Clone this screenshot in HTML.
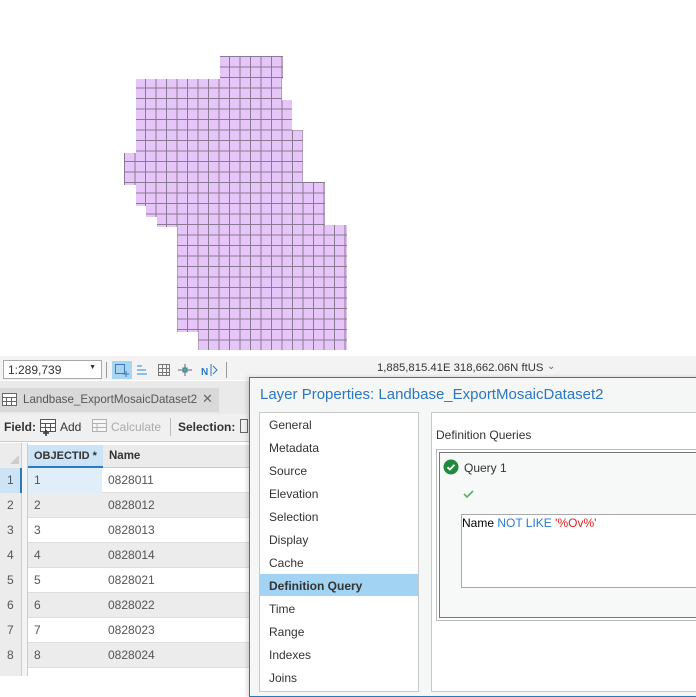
<!DOCTYPE html>
<html><head><style>
*{margin:0;padding:0;box-sizing:border-box}
body{width:696px;height:676px;overflow:hidden;background:#fff;font-family:"Liberation Sans",sans-serif;position:relative;font-size:12px;color:#333}
.a{position:absolute}
.map{left:124px;top:56px;width:224px;height:295px;background-color:#e6c6f8;
background-image:linear-gradient(90deg,#8a7a90 1px,transparent 1px),linear-gradient(#8a7a90 1px,transparent 1px);
background-size:10.5px 10.5px;background-position:0 0;
clip-path:polygon(96px 0,159px 0,159px 23px,158px 23px,158px 44px,168px 44px,168px 74px,179px 74px,179px 126px,201px 126px,201px 169px,223px 169px,223px 294px,74px 294px,74px 276px,53px 276px,53px 171px,33px 171px,33px 161px,22px 161px,22px 150px,12px 150px,12px 129px,0 129px,0 97px,12px 97px,12px 23px,96px 23px)}
.li{position:absolute;left:10px;font-size:12px;color:#333}
</style></head><body>
<div class="a map"></div>
<!-- status bar -->
<div class="a" style="left:0;top:356px;width:696px;height:24px;background:#f3f3f3"></div>
<div class="a" style="left:3px;top:360px;width:99px;height:19px;background:#fff;border:1px solid #aaa;font-size:12px;padding:2px 4px">1:289,739<span style="position:absolute;right:5px;top:3px;font-size:7px">▼</span></div>
<div class="a" style="left:106px;top:362px;width:1px;height:16px;background:#999"></div>
<div class="a" style="left:112px;top:361px;width:20px;height:18px;background:#a9d5f3"></div>
<svg class="a" style="left:112px;top:361px" width="120" height="18"><g fill="none" stroke="#3a7bc0" stroke-width="1"><rect x="3.5" y="3.5" width="9" height="9"/><path d="M11 13h6M14 10v6"/><path d="M25 5h5M25 9h9M25 13h10" stroke="#2a8ad0"/><rect x="46.5" y="3.5" width="11" height="11" stroke="#777"/><path d="M46 7.5h12M46 11.5h12M50.5 3v12M54.5 3v12" stroke="#777"/><path d="M66 9h14M73 3v12" stroke="#666"/><rect x="71" y="7" width="4" height="4" fill="#6a6"/></g><text x="89" y="14" font-size="10" font-weight="bold" fill="#2a7ac0" font-family="Liberation Sans">N</text><path d="M99 3v12M101 5l4 4-4 4" stroke="#2a7ac0" fill="none"/></svg>
<div class="a" style="left:226px;top:362px;width:1px;height:16px;background:#999"></div>
<div class="a" style="left:377px;top:362px;font-size:11.3px;color:#333">1,885,815.41E 318,662.06N ftUS</div>
<div class="a" style="left:547px;top:361px;font-size:10px;color:#666">⌄</div>
<!-- tab row -->
<div class="a" style="left:0;top:381px;width:250px;height:33px;background:#eaeaea"></div>
<div class="a" style="left:0;top:388px;width:219px;height:24px;background:#d9d9d9"></div>
<svg class="a" style="left:2px;top:393px" width="16" height="14"><rect x=".5" y=".5" width="14" height="12" fill="#fff" stroke="#666"/><path d="M0 4.5h15M0 8.5h15M4.5 4v9M9.5 4v9" stroke="#666"/></svg>
<div class="a" style="left:23px;top:393px;font-size:11.6px;color:#555">Landbase_ExportMosaicDataset2</div>
<div class="a" style="left:202px;top:391px;font-size:13px;color:#666">✕</div>
<div class="a" style="left:0;top:414px;width:250px;height:28px;background:#f0f0f0;border-bottom:1px solid #ccc"></div>
<div class="a" style="left:4px;top:420px;font-size:12px;font-weight:bold;color:#333">Field:</div>
<svg class="a" style="left:40px;top:419px" width="18" height="17"><rect x=".5" y=".5" width="15" height="12" fill="#fff" stroke="#555"/><path d="M0 4.5h16M0 8.5h16M5.5 4v9M10.5 4v9" stroke="#555"/><path d="M3 14h6M6 11v6" stroke="#333" stroke-width="1.5"/></svg>
<div class="a" style="left:60px;top:420px;font-size:12px;color:#333">Add</div>
<svg class="a" style="left:92px;top:419px" width="16" height="17" opacity=".4"><rect x=".5" y=".5" width="14" height="12" fill="#fff" stroke="#555"/><path d="M0 4.5h15M0 8.5h15M5 4v9" stroke="#555"/></svg>
<div class="a" style="left:111px;top:420px;font-size:12px;color:#aaa">Calculate</div>
<div class="a" style="left:170px;top:418px;width:1px;height:18px;background:#bbb"></div>
<div class="a" style="left:178px;top:420px;font-size:12px;font-weight:bold;color:#333">Selection:</div>
<div class="a" style="left:240px;top:419px;width:8px;height:14px;border:1px solid #666"></div>
<!-- table -->
<div class="a" style="left:0;top:443px;width:22px;height:233px;background:#ececec;border-right:1px solid #ccc"></div>
<div class="a" style="left:22px;top:443px;width:6px;height:233px;background:#f4f4f4;border-right:1px solid #ccc"></div>
<div class="a" style="left:28px;top:445px;width:222px;height:23px;background:#ebebeb;border-bottom:1px solid #ccc"></div>
<div class="a" style="left:28px;top:445px;width:75px;height:23px;background:#cde4f6;border-bottom:2px solid #2a7ac0"></div>
<div class="a" style="left:34px;top:450px;font-size:11px;font-weight:bold;color:#333">OBJECTID *</div>
<div class="a" style="left:109px;top:450px;font-size:11.5px;font-weight:bold;color:#333">Name</div>
<div class="a" style="left:10px;top:455px;width:0;height:0;border-left:9px solid transparent;border-bottom:9px solid #ccc"></div>
<div class="a" style="left:102px;top:468px;width:1px;height:208px;background:#ccc"></div>

<div class="a" style="left:28px;top:468px;width:222px;height:25px;background:#fff;border-bottom:1px solid #ddd"></div>
<div class="a" style="left:28px;top:468px;width:74px;height:25px;background:#e0eef9"></div>
<div class="a" style="left:0;top:468px;width:22px;height:25px;background:#cde4f6;border-right:2px solid #2a7ac0"></div>
<div class="a" style="left:28px;top:493px;width:222px;height:25px;background:#ececec;border-bottom:1px solid #ddd"></div>
<div class="a" style="left:28px;top:518px;width:222px;height:25px;background:#fff;border-bottom:1px solid #ddd"></div>
<div class="a" style="left:28px;top:543px;width:222px;height:25px;background:#ececec;border-bottom:1px solid #ddd"></div>
<div class="a" style="left:28px;top:568px;width:222px;height:25px;background:#fff;border-bottom:1px solid #ddd"></div>
<div class="a" style="left:28px;top:593px;width:222px;height:25px;background:#ececec;border-bottom:1px solid #ddd"></div>
<div class="a" style="left:28px;top:618px;width:222px;height:25px;background:#fff;border-bottom:1px solid #ddd"></div>
<div class="a" style="left:28px;top:643px;width:222px;height:25px;background:#ececec;border-bottom:1px solid #ddd"></div>
<div class="a" style="left:28px;top:668px;width:222px;height:8px;background:#fff"></div>
<div class="a" style="left:0;top:468px;width:250px;font-size:12px;color:#555;line-height:25px">
<div style="position:relative;height:25px"><span style="position:absolute;left:7px">1</span><span style="position:absolute;left:34px">1</span><span style="position:absolute;left:108px">0828011</span></div>
<div style="position:relative;height:25px"><span style="position:absolute;left:7px">2</span><span style="position:absolute;left:34px">2</span><span style="position:absolute;left:108px">0828012</span></div>
<div style="position:relative;height:25px"><span style="position:absolute;left:7px">3</span><span style="position:absolute;left:34px">3</span><span style="position:absolute;left:108px">0828013</span></div>
<div style="position:relative;height:25px"><span style="position:absolute;left:7px">4</span><span style="position:absolute;left:34px">4</span><span style="position:absolute;left:108px">0828014</span></div>
<div style="position:relative;height:25px"><span style="position:absolute;left:7px">5</span><span style="position:absolute;left:34px">5</span><span style="position:absolute;left:108px">0828021</span></div>
<div style="position:relative;height:25px"><span style="position:absolute;left:7px">6</span><span style="position:absolute;left:34px">6</span><span style="position:absolute;left:108px">0828022</span></div>
<div style="position:relative;height:25px"><span style="position:absolute;left:7px">7</span><span style="position:absolute;left:34px">7</span><span style="position:absolute;left:108px">0828023</span></div>
<div style="position:relative;height:25px"><span style="position:absolute;left:7px">8</span><span style="position:absolute;left:34px">8</span><span style="position:absolute;left:108px">0828024</span></div>
</div>
<!-- dialog -->
<div class="a" style="left:249px;top:377px;width:460px;height:320px;background:#f5f6f6;border:1px solid #2a7ab8;box-shadow:-2px 0 4px rgba(0,0,0,.15)"></div>
<div class="a" style="left:260px;top:386px;font-size:15px;color:#2a78c2">Layer Properties: Landbase_ExportMosaicDataset2</div>
<div class="a" style="left:259px;top:412px;width:160px;height:280px;background:#fff;border:1px solid #c8c8c8"></div>
<div class="a" style="left:260px;top:574px;width:158px;height:22px;background:#a3d3f2"></div>
<div class="a" style="left:259px;top:412px;width:160px;height:264px">
<div class="li" style="top:6px">General</div>
<div class="li" style="top:29px">Metadata</div>
<div class="li" style="top:52px">Source</div>
<div class="li" style="top:75px">Elevation</div>
<div class="li" style="top:98px">Selection</div>
<div class="li" style="top:121px">Display</div>
<div class="li" style="top:144px">Cache</div>
<div class="li" style="top:167px;font-weight:bold">Definition Query</div>
<div class="li" style="top:190px">Time</div>
<div class="li" style="top:213px">Range</div>
<div class="li" style="top:236px">Indexes</div>
<div class="li" style="top:259px">Joins</div>
</div>
<div class="a" style="left:431px;top:412px;width:270px;height:280px;background:#fff;border:1px solid #c8c8c8"></div>
<div class="a" style="left:436px;top:428px;font-size:12px;color:#333">Definition Queries</div>
<div class="a" style="left:436px;top:449px;width:270px;height:172px;border:1px solid #bbb;padding:2px"><div style="width:100%;height:100%;border:1px solid #777;background:#f7f8f8"></div></div>
<svg class="a" style="left:443px;top:459px" width="16" height="16"><circle cx="8" cy="8" r="7.5" fill="#1f8a3a"/><path d="M4.5 8.2l2.4 2.4 4.6-4.8" stroke="#fff" stroke-width="1.8" fill="none"/></svg>
<div class="a" style="left:464px;top:461px;font-size:12px;color:#333">Query 1</div>
<svg class="a" style="left:463px;top:489px" width="12" height="10"><path d="M1 5l3 3 6-6" stroke="#5aae6a" stroke-width="1.6" fill="none"/></svg>
<div class="a" style="left:461px;top:514px;width:240px;height:74px;background:#fff;border:1px solid #aaa"></div>
<div class="a" style="left:462px;top:516px;font-size:12px;color:#000">Name <span style="color:#2a7ad0">NOT LIKE</span> <span style="color:#e02020">'%Ov%'</span></div>
</body></html>
